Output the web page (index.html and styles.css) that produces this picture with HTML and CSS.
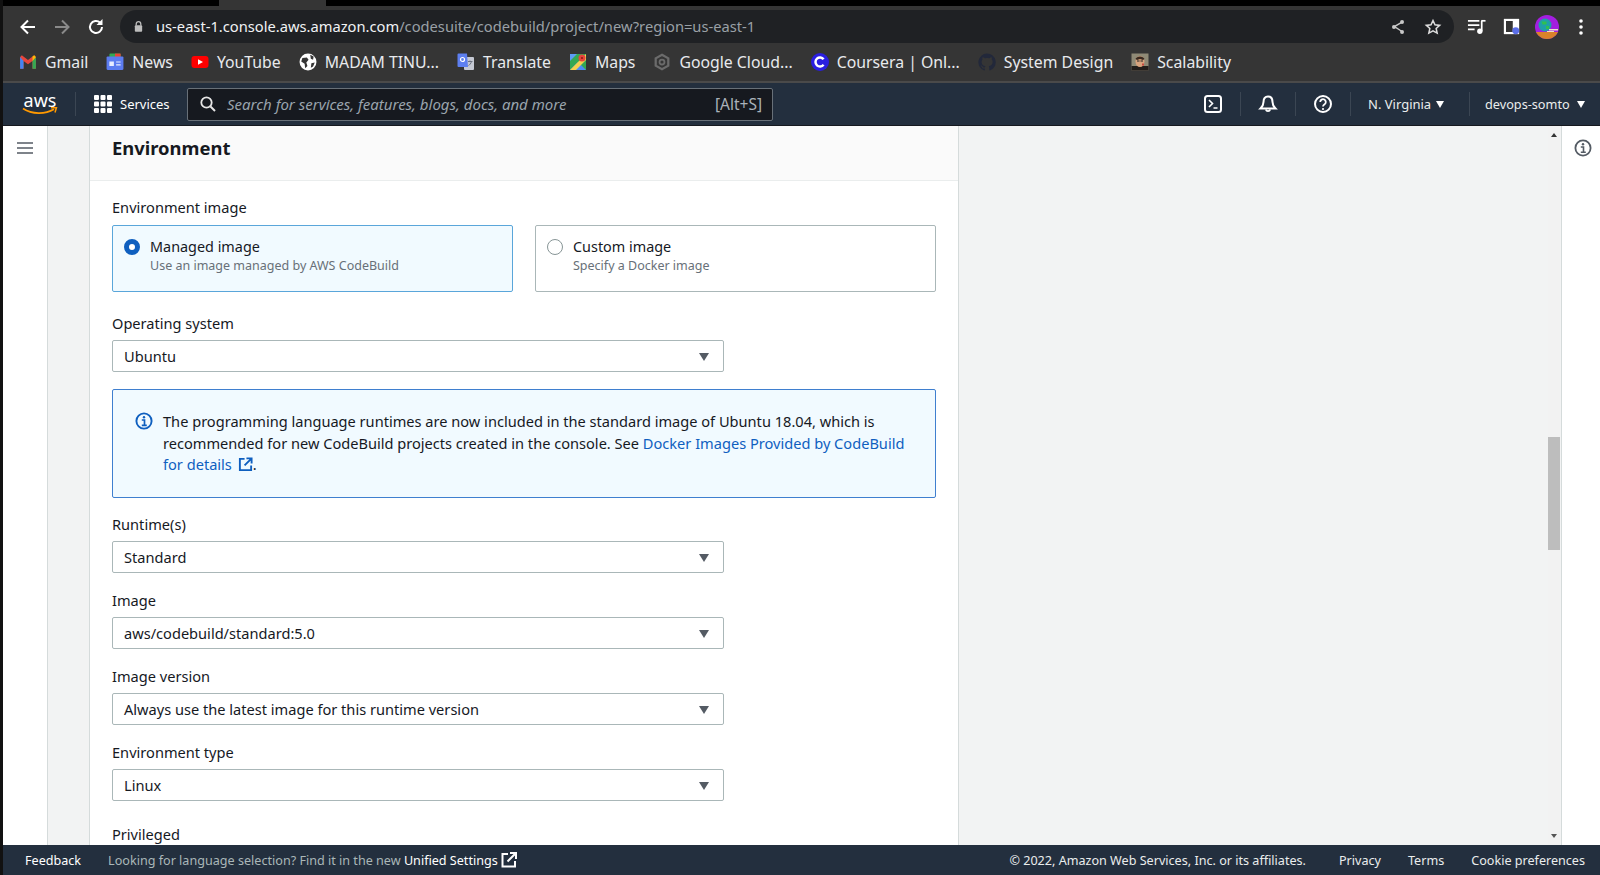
FILE: index.html
```html
<!DOCTYPE html>
<html lang="en">
<head>
<meta charset="utf-8">
<title>CodeBuild - Create build project</title>
<link rel="stylesheet" href="styles.css">
</head>
<body>
<div class="tabstrip"><span class="tab-notch"></span></div>
<header class="toolbar">
  <svg class="tb-ico" viewBox="0 0 20 20"><path d="M17 10H4M10 3.500 3.500 10l6.500 6.500" fill="none" stroke="#fff" stroke-width="2"/></svg>
  <svg class="tb-ico dim" viewBox="0 0 20 20"><path d="M3 10h13M10 3.500l6.500 6.500-6.500 6.500" fill="none" stroke="#8a8a8a" stroke-width="2"/></svg>
  <svg class="tb-ico" viewBox="0 0 20 20"><path d="M16 10a6 6 0 1 1-1.800-4.300" fill="none" stroke="#fff" stroke-width="2"/><path d="M16.500 2v6h-6z" fill="#fff"/></svg>
  <div class="omnibox">
    <svg class="lock" viewBox="0 0 12 14"><path d="M3.500 6V4.200a2.500 2.500 0 0 1 5 0V6" fill="none" stroke="#bdbdbd" stroke-width="1.400"/><rect x="2" y="5.600" width="8" height="7" rx="1" fill="#bdbdbd"/></svg>
    <span class="url"><b>us-east-1.console.aws.amazon.com</b>/codesuite/codebuild/project/new?region=us-east-1</span>
    <svg class="omni-ico" viewBox="0 0 20 20"><path d="M14.500 4.500 6 9.500l8.500 5.500" fill="none" stroke="#c8c8c8" stroke-width="1.600"/><circle cx="14.500" cy="4.500" r="2.200" fill="#c8c8c8"/><circle cx="5.500" cy="10" r="2.200" fill="#c8c8c8"/><circle cx="14.500" cy="15.500" r="2.200" fill="#c8c8c8"/></svg>
    <svg class="omni-ico" viewBox="0 0 20 20"><path d="m10 2.800 2.200 4.800 5.200.6-3.900 3.500 1.100 5.100L10 14.200l-4.600 2.600 1.100-5.100L2.600 8.200l5.200-.6z" fill="none" stroke="#dcdcdc" stroke-width="1.700"/></svg>
  </div>
  <div class="tb-right">
    <svg class="ext queue" viewBox="0 0 20 20"><path d="M1 4h12M1 8.500h12M1 13h7" stroke="#fff" stroke-width="1.800"/><path d="M15.500 4v11" stroke="#fff" stroke-width="1.800"/><path d="M15 4h4.500" stroke="#fff" stroke-width="1.800"/><circle cx="13.500" cy="15" r="2.800" fill="#fff"/></svg>
    <svg class="ext" viewBox="0 0 20 20"><path d="M1 1h18v18H1z" fill="#fff"/><path d="M3.500 3.500h8v13h-8z" fill="#353535"/><circle cx="15" cy="15" r="4" fill="#5b6ee8"/></svg>
    <svg class="avatar" viewBox="0 0 24 24"><defs><clipPath id="av"><circle cx="12" cy="12" r="12"/></clipPath></defs><g clip-path="url(#av)"><rect width="24" height="24" fill="#a31ee0"/><rect y="17" width="24" height="7" fill="#d9822b"/><circle cx="10" cy="10" r="6.500" fill="#1fa0a8"/><path d="M6.500 6.500h5v3h-4zM11 11h3v3h-3z" fill="#2fc04f"/><path d="M14 14h9v1.500h-9zM12 16h7v1h-7z" fill="#eadfd0"/></g></svg>
    <svg class="menu-dots" viewBox="0 0 6 20"><circle cx="3" cy="4" r="1.800" fill="#fff"/><circle cx="3" cy="10" r="1.800" fill="#fff"/><circle cx="3" cy="16" r="1.800" fill="#fff"/></svg>
  </div>
</header>
<nav class="bookmarks">
  <a class="bm"><svg class="fav" viewBox="0 0 16 16"><path d="M1 3.500V14h3V7l4 3 4-3v7h3V3.500L13.500 2 8 6.200 2.500 2z" fill="#e8453c"/><path d="M1 3.500V14h3V7z" fill="#4285f4"/><path d="M12 7v7h3V3.500z" fill="#34a853"/><path d="M12 7l3-3.500L13.500 2 12 3.200z" fill="#fbbc04"/></svg>Gmail</a>
  <a class="bm"><svg class="fav" viewBox="0 0 16 16"><rect x="3" y="0.500" width="10" height="5" rx="1" fill="#34a853"/><path d="M8 .5h5v3H8z" fill="#ea4335"/><rect x="0.500" y="3" width="15" height="12" rx="1" fill="#5c7cf0"/><path d="M3 7.500h4v4H3zM9 7.500h4v1H9zM9 10h4v1H9z" fill="#e8ecff"/></svg>News</a>
  <a class="bm"><svg class="fav" viewBox="0 0 18 16"><rect x="0.500" y="2" width="17" height="12" rx="3" fill="#f00"/><path d="M7 5.200v5.600L12 8z" fill="#fff"/></svg>YouTube</a>
  <a class="bm"><svg class="fav" viewBox="0 0 16 16"><circle cx="8" cy="8" r="7.500" fill="#fff"/><path d="M3 4.500 7 4l1.500 2-2 2.500 1 3-2 2-.5-4L2 7.500zM10 1.500l3 1.500-.5 3-2-1zM11 9l3-.5-1.500 3.500-2 1z" fill="#353535"/></svg>MADAM TINU...</a>
  <a class="bm"><svg class="fav" viewBox="0 0 18 18"><rect x="7" y="4" width="10" height="13" rx="1" fill="#c5c9d3"/><path d="M1.500 0.500H10l1 13.500H1.500a1 1 0 0 1-1-1V1.500a1 1 0 0 1 1-1z" fill="#5d7ff0"/><circle cx="5.500" cy="6.500" r="2" fill="none" stroke="#fff" stroke-width="1.200"/><path d="M11 8.500h4.500M13 7.500v1m1.500 0c-.5 2-2 3.500-3 4" stroke="#6b7280" fill="none"/></svg>Translate</a>
  <a class="bm"><svg class="fav" viewBox="0 0 18 18"><path d="M1 1h16v16H1z" fill="#34a853"/><path d="M1 17 9 9l8 8z" fill="#4d8df5"/><path d="M1 1h7L1 8z" fill="#5c9cf5"/><path d="M1 17 17 1v6L7 17z" fill="#f5d04e"/><circle cx="13" cy="5" r="3.500" fill="#e8453c"/><circle cx="13" cy="5" r="1.100" fill="#8e1c16"/></svg>Maps</a>
  <a class="bm"><svg class="fav" viewBox="0 0 16 16"><path d="M8 1.500 13.600 4.800v6.400L8 14.500 2.400 11.200V4.800z" fill="none" stroke="#6b6b6b" stroke-width="2"/><circle cx="8" cy="8" r="2.200" fill="none" stroke="#6b6b6b" stroke-width="1.600"/></svg>Google Cloud...</a>
  <a class="bm"><svg class="fav" viewBox="0 0 16 16"><circle cx="8" cy="8" r="8" fill="#2a1ee0"/><path d="M11.200 5.600a4 4 0 1 0 0 4.800" fill="none" stroke="#fff" stroke-width="2.200"/></svg>Coursera | Onl...</a>
  <a class="bm"><svg class="fav" viewBox="0 0 16 16"><path d="M8 .5a7.700 7.700 0 0 0-2.400 15c.4.100.5-.2.500-.4v-1.400c-2.100.5-2.600-.9-2.600-.9-.3-.9-.8-1.100-.8-1.100-.7-.5.100-.5.100-.5.800.1 1.200.8 1.200.8.700 1.200 1.800.8 2.200.6.100-.5.300-.8.500-1-1.700-.2-3.500-.9-3.500-3.800 0-.8.300-1.500.8-2-.1-.2-.3-1 .1-2 0 0 .6-.2 2.100.8a7.300 7.300 0 0 1 3.800 0c1.500-1 2.100-.8 2.100-.8.400 1 .2 1.800.1 2 .5.500.8 1.200.8 2 0 2.900-1.800 3.600-3.500 3.800.3.200.5.700.5 1.400v2.100c0 .2.100.5.500.4A7.700 7.700 0 0 0 8 .5z" fill="#22283a"/></svg>System Design</a>
  <a class="bm"><svg class="fav" viewBox="0 0 18 18"><rect x="0.500" y="0.500" width="17" height="17" fill="#8f8a76"/><rect x="0.500" y="13" width="17" height="4.500" fill="#231d1a"/><ellipse cx="9" cy="8.500" rx="4.500" ry="5.500" fill="#d8a27c"/><path d="M4.500 6c1-3.500 8-3.500 9 0l-1.500 1-3-1-3 1z" fill="#3a2a20"/><path d="M6 8h2.500M9.500 8H12" stroke="#222"/><path d="M11 10.500h2v2h-2z" fill="#c8483f"/></svg>Scalability</a>
</nav>
<nav class="topnav">
  <a class="aws"><span class="aws-word">aws</span><svg class="aws-smile" viewBox="0 0 36 9"><path d="M1 1.500c9 6 22 6 31 .8" fill="none" stroke="#f90" stroke-width="1.800"/><path d="m29 .8 5.500-.3-1.500 5" fill="none" stroke="#f90" stroke-width="1.500"/></svg></a>
  <span class="nav-sep first"></span>
  <a class="services"><svg class="grid" viewBox="0 0 18 18"><g fill="#fff"><rect width="5" height="5" rx="1"/><rect x="6.500" width="5" height="5" rx="1"/><rect x="13" width="5" height="5" rx="1"/><rect y="6.500" width="5" height="5" rx="1"/><rect x="6.500" y="6.500" width="5" height="5" rx="1"/><rect x="13" y="6.500" width="5" height="5" rx="1"/><rect y="13" width="5" height="5" rx="1"/><rect x="6.500" y="13" width="5" height="5" rx="1"/><rect x="13" y="13" width="5" height="5" rx="1"/></g></svg>Services</a>
  <div class="search">
    <svg class="search-ico" viewBox="0 0 16 16"><circle cx="6.500" cy="6.500" r="5.200" fill="none" stroke="#e6e6e6" stroke-width="1.800"/><path d="m10.500 10.500 4.500 4.500" stroke="#e6e6e6" stroke-width="2"/></svg>
    <span class="search-ph">Search for services, features, blogs, docs, and more</span>
    <span class="search-key">[Alt+S]</span>
  </div>
  <div class="nav-right">
    <svg class="nav-ico" viewBox="0 0 20 20"><rect x="2" y="2" width="16" height="16" rx="2.500" fill="none" stroke="#fff" stroke-width="2"/><path d="m6 6 3.500 3.500L6 13M10.500 14h4" fill="none" stroke="#fff" stroke-width="1.600"/></svg>
    <span class="nav-sep"></span>
    <svg class="nav-ico" viewBox="0 0 20 20"><path d="M10 2.500c-3 0-4.500 2.500-4.500 5.500 0 3-1.500 5-3 6.500h15c-1.500-1.500-3-3.500-3-6.500s-1.500-5.500-4.500-5.500z" fill="none" stroke="#fff" stroke-width="2"/><path d="M7.800 15.500a2.300 2.300 0 0 0 4.400 0" fill="none" stroke="#fff" stroke-width="1.800"/></svg>
    <span class="nav-sep"></span>
    <svg class="nav-ico" viewBox="0 0 20 20"><circle cx="10" cy="10" r="8" fill="none" stroke="#fff" stroke-width="2"/><path d="M7.200 8a2.800 2.800 0 1 1 4.400 2.300c-1 .7-1.600 1.200-1.600 2.300" fill="none" stroke="#fff" stroke-width="1.800"/><circle cx="10" cy="15" r="1.100" fill="#fff"/></svg>
    <span class="nav-sep"></span>
    <a class="nav-menu region">N. Virginia<i class="caret"></i></a>
    <span class="nav-sep"></span>
    <a class="nav-menu account">devops-somto<i class="caret"></i></a>
  </div>
</nav>
<div class="app">
  <aside class="sidenav">
    <svg class="burger" viewBox="0 0 16 12"><path d="M0 1h16M0 6h16M0 11h16" stroke="#545b64" stroke-width="1.700"/></svg>
  </aside>
  <main class="content">
    <section class="card">
      <h2 class="card-head">Environment</h2>
      <div class="card-body">
        <div class="label first">Environment image</div>
        <div class="tiles">
          <label class="tile on">
            <span class="radio on"></span>
            <span class="tile-text"><span class="tile-title">Managed image</span><span class="tile-desc">Use an image managed by AWS CodeBuild</span></span>
          </label>
          <label class="tile">
            <span class="radio"></span>
            <span class="tile-text"><span class="tile-title">Custom image</span><span class="tile-desc">Specify a Docker image</span></span>
          </label>
        </div>
        <div class="label">Operating system</div>
        <div class="select">Ubuntu<i class="sel-caret"></i></div>
        <div class="alert">
          <svg class="alert-ico" viewBox="0 0 18 18"><circle cx="9" cy="9" r="7.600" fill="none" stroke="#0f5fbf" stroke-width="1.900"/><circle cx="9" cy="5.200" r="1.200" fill="#0f5fbf"/><path d="M6.800 8h2.700v5M6.800 13.300h5" fill="none" stroke="#0f5fbf" stroke-width="1.700"/></svg>
          <p class="alert-text">
            <span class="line">The programming language runtimes are now included in the standard image of Ubuntu 18.04, which is</span>
            <span class="line">recommended for new CodeBuild projects created in the console. See <a class="link">Docker Images Provided by CodeBuild</a></span>
            <span class="line"><a class="link">for details <svg class="ext-link" viewBox="0 0 16 16"><path d="M7 2H2v12h12V9" fill="none" stroke="#0f5fbf" stroke-width="2"/><path d="M9 1.500h5.500V7M14 2 7 9" fill="none" stroke="#0f5fbf" stroke-width="2"/></svg></a>.</span>
          </p>
        </div>
        <div class="label">Runtime(s)</div>
        <div class="select mb">Standard<i class="sel-caret"></i></div>
        <div class="label">Image</div>
        <div class="select mb">aws/codebuild/standard:5.0<i class="sel-caret"></i></div>
        <div class="label">Image version</div>
        <div class="select mb">Always use the latest image for this runtime version<i class="sel-caret"></i></div>
        <div class="label">Environment type</div>
        <div class="select mb">Linux<i class="sel-caret"></i></div>
        <div class="label privileged">Privileged</div>
      </div>
    </section>
    <div class="scrollbar">
      <i class="sb-up"></i>
      <span class="sb-track"><span class="sb-thumb"></span></span>
      <i class="sb-down"></i>
    </div>
  </main>
  <aside class="tools">
    <svg class="tools-ico" viewBox="0 0 18 18"><circle cx="9" cy="9" r="7.600" fill="none" stroke="#545b64" stroke-width="1.800"/><circle cx="9" cy="5.200" r="1.200" fill="#545b64"/><path d="M6.800 8h2.700v5M6.800 13.300h5" fill="none" stroke="#545b64" stroke-width="1.600"/></svg>
  </aside>
</div>
<footer class="footer">
  <a class="ft-feedback">Feedback</a>
  <span class="ft-lang">Looking for language selection? Find it in the new <a class="ft-strong">Unified Settings</a></span>
  <svg class="ft-ext" viewBox="0 0 16 16"><path d="M7 2H1.500v12.500H14V9" fill="none" stroke="#fff" stroke-width="2"/><path d="M9 1h6v6M14.500 1.500 6.500 9.500" fill="none" stroke="#fff" stroke-width="2"/></svg>
  <span class="ft-right">
    <span class="ft-copy">© 2022, Amazon Web Services, Inc. or its affiliates.</span>
    <a class="ft-link">Privacy</a>
    <a class="ft-link">Terms</a>
    <a class="ft-link">Cookie preferences</a>
  </span>
</footer>
</body>
</html>
```
FILE: styles.css
```css
* { box-sizing: border-box; }
html, body { margin: 0; height: 875px; overflow: hidden; }
body {
  width: 1600px;
  display: flex;
  flex-direction: column;
  background: #111;
  padding-left: 3px;
  font-family: "Noto Sans", "Open Sans", sans-serif;
  color: #16191f;
}
svg { display: block; flex: none; }

.tabstrip { height: 6px; background: #000; flex: none; }
.tab-notch { display: block; width: 107px; height: 6px; background: #353535; margin-left: 216px; }

.toolbar { height: 37px; background: #353535; display: flex; align-items: center; padding: 4px 0 0 15px; flex: none; }
.tb-ico { width: 20px; height: 20px; margin-right: 14px; }
.omnibox {
  width: 1334px; height: 33px; background: #1f2124; border-radius: 17px;
  display: flex; align-items: center; padding: 0 12px 0 13px;
}
.lock { width: 11px; height: 13px; margin-right: 12px; }
.url { color: #9aa0a6; flex: 1; white-space: nowrap; font-size: 14.700px; padding-bottom: 2px; }
.url b { font-weight: 400; color: #f1f3f4; }
.omni-ico { width: 18px; height: 18px; margin-left: 17px; }
.tb-right { display: flex; align-items: center; margin-left: 13px; }
.ext { width: 17px; height: 17px; margin-right: 15px; }
.queue { width: 19px; height: 19px; margin-right: 17px; }
.avatar { width: 24px; height: 24px; margin-right: 19px; }
.menu-dots { width: 6px; height: 20px; }

.bookmarks {
  height: 40px; background: #353535; border-bottom: 2px solid #4a4a4a; display: flex; align-items: center;
  padding-left: 16px; gap: 18px; flex: none; font-size: 15.800px; color: #e8eaed;
}
.bm { display: flex; align-items: center; gap: 8px; white-space: nowrap; }
.fav { width: 18px; height: 18px; }

.topnav {
  height: 43px; background: #232f3e; display: flex; align-items: center; flex: none;
  color: #fff; font-size: 13px; padding-left: 19px; border-bottom: 1px solid #16191f;
}
.aws { width: 36px; display: flex; flex-direction: column; align-items: center; flex: none; }
.aws-word { font-size: 18px; line-height: 14px; height: 14px; color: #fff; }
.aws-smile { width: 36px; height: 9px; }
.nav-sep { width: 1px; height: 24px; background: #3b4653; display: block; flex: none; }
.nav-sep.first { margin: 0 18px 0 17px; }
.services { display: flex; align-items: center; gap: 8px; font-size: 13px; width: 94px; }
.grid { width: 18px; height: 18px; }
.search {
  width: 586px; height: 33px; background: #16191f; border: 1px solid #687078; border-radius: 2px;
  display: flex; align-items: center; padding: 0 10px 0 12px; margin-left: -1px;
}
.search-ico { width: 16px; height: 16px; margin-right: 11px; }
.search-ph { flex: 1; color: #9aa4ad; font-style: italic; font-size: 15px; white-space: nowrap; }
.search-key { color: #aab2ba; font-size: 15.500px; }
.nav-right { display: flex; align-items: center; margin-left: 413px; }
.nav-ico { width: 20px; height: 20px; margin: 0 17px; }
.nav-menu { display: flex; align-items: center; white-space: nowrap; gap: 5px; color: #eaeded; font-size: 13px; }
.region { width: 118px; padding-left: 17px; }
.account { padding-left: 15px; font-size: 12.700px; gap: 7px; }
.caret { width: 0; height: 0; border-left: 4.500px solid transparent; border-right: 4.500px solid transparent; border-top: 7px solid #fff; }

.app { flex: 1; display: flex; min-height: 0; }
.sidenav { width: 45px; background: #fff; border-right: 1px solid #d5dbdb; padding: 16px 0 0 14px; flex: none; }
.burger { width: 16px; height: 12px; }
.content { flex: 1; min-width: 0; background: #f2f3f3; display: flex; padding-left: 41px; overflow: hidden; }
.card { width: 870px; flex: none; background: #fff; border: 1px solid #d5dbdb; border-top: 0; border-bottom: 0; align-self: stretch; overflow: hidden; }
.card-head { margin: 0; height: 55px; background: #fafafa; border-bottom: 1px solid #eaeded; padding: 9px 22px 0; font-size: 18.400px; line-height: 26px; font-weight: 700; }
.card-body { padding: 16px 22px 0; }
.label { font-size: 14.600px; line-height: 22px; height: 22px; margin-bottom: 6px; }
.label.first { margin-top: -1px; margin-bottom: 7px; }
.tiles { display: flex; gap: 22px; margin-bottom: 20px; }
.tile { flex: none; width: 401px; height: 67px; border: 1px solid #aab7b8; display: flex; padding: 10px 11px; gap: 10px; border-radius: 2px; }
.tile.on { border-color: #5aa6da; background: #f1faff; }
.radio { width: 16px; height: 16px; border-radius: 50%; border: 1px solid #879596; background: #fff; margin-top: 3px; flex: none; }
.radio.on { border: 5px solid #0f5fbf; }
.tile-text { display: flex; flex-direction: column; }
.tile-title { font-size: 14.400px; line-height: 22px; }
.tile-desc { font-size: 12.500px; line-height: 16px; color: #687078; }
.select {
  width: 612px; height: 32px; border: 1px solid #aab7b8; border-radius: 2px; background: #fff;
  padding: 0 14px 0 11px; display: flex; align-items: center; font-size: 14.600px; justify-content: space-between;
}
.select.mb { margin-bottom: 16px; }
.sel-caret { width: 0; height: 0; border-left: 5.500px solid transparent; border-right: 5.500px solid transparent; border-top: 8px solid #545b64; margin-top: 1px; }
.alert { width: 824px; height: 109px; margin: 17px 0 15px; border: 1px solid #3f7fcf; background: #f1faff; border-radius: 2px; display: flex; padding: 21px 20px 0 22px; gap: 10px; }
.alert-ico { width: 18px; height: 18px; margin-top: 1px; }
.alert-text { margin: 0; font-size: 14.600px; line-height: 21.600px; width: 750px; }
.line { display: block; white-space: nowrap; }
.link { color: #0f5fbf; }
.ext-link { display: inline-block; width: 15px; height: 15px; vertical-align: -2px; margin-left: 2px; }
.privileged { margin-top: 22px; }

.scrollbar { margin-left: 589px; width: 12px; display: flex; flex-direction: column; align-items: center; padding: 7px 0; flex: none; background: #f2f2f2; }
.sb-up { width: 0; height: 0; border-left: 3px solid transparent; border-right: 3px solid transparent; border-bottom: 4px solid #333; flex: none; }
.sb-down { width: 0; height: 0; border-left: 3px solid transparent; border-right: 3px solid transparent; border-top: 4px solid #555; flex: none; }
.sb-track { flex: 1; width: 100%; padding-top: 300px; }
.sb-thumb { display: block; width: 12px; height: 113px; background: #bdbdbd; }

.tools { width: 39px; flex: none; background: #fff; border-left: 1px solid #d5dbdb; padding: 13px 0 0 12px; }
.tools-ico { width: 18px; height: 18px; }

.footer { height: 30px; flex: none; background: #232f3e; color: #fff; display: flex; align-items: center; font-size: 12.600px; padding-left: 22px; white-space: nowrap; }
.ft-feedback { color: #fff; margin-right: 27px; }
.ft-lang { color: #aab7b8; }
.ft-strong { color: #fff; }
.ft-ext { width: 16px; height: 16px; margin-left: 3px; }
.ft-right { margin-left: auto; display: flex; align-items: center; padding-right: 15px; color: #eaeded; }
.ft-copy { margin-right: 6px; }
.ft-link { margin-left: 27px; }
```
